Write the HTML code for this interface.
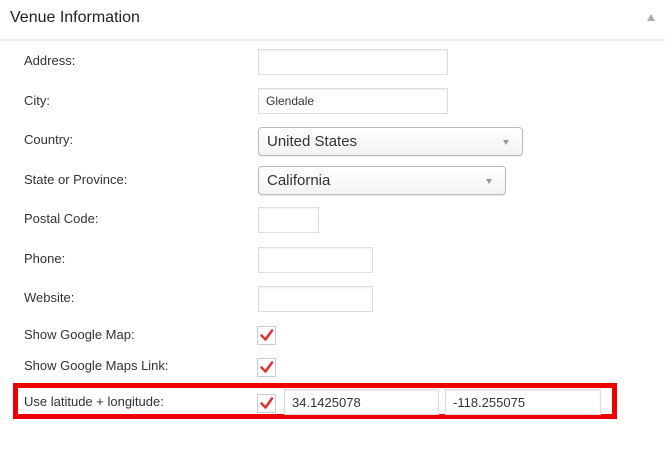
<!DOCTYPE html>
<html><head><style>
*{box-sizing:border-box;margin:0;padding:0}
body{width:665px;height:449px;background:#fff;font-family:"Liberation Sans",sans-serif;color:#333;position:relative;overflow:hidden}
.a{position:absolute}
.h{left:10px;top:9px;font-size:16px;color:#222}
.hr{left:0;top:39px;width:665px;height:2px;background:#eee}
.tri{left:647px;top:14px;width:0;height:0;border-left:4px solid transparent;border-right:4px solid transparent;border-bottom:7px solid #aaa}
.l{left:24px;font-size:13px;color:#333}
.i{border:1px solid #ddd;box-shadow:inset 0 1px 2px rgba(0,0,0,.07);background:#fff;font-size:12px;padding-left:7px;line-height:25px}
.s{border:1px solid #bbb;border-radius:4px;background:linear-gradient(#fff,#f3f3f3);box-shadow:0 1px 1px rgba(0,0,0,.1);font-size:15px;padding-left:8px;line-height:28px;color:#333}
.s:after{content:"";position:absolute;right:13px;top:12px;border-left:3px solid transparent;border-right:3px solid transparent;border-top:5px solid #999}
.red{left:13px;top:383px;width:604px;height:36px;border:5px solid #e00}
</style></head><body>
<div class="a h">Venue Information</div>
<div class="a hr"></div>
<div class="a tri"></div>
<div class="a l" style="top:53px">Address:</div>
<div class="a i" style="left:258px;top:49px;width:190px;height:26px"></div>
<div class="a l" style="top:93px">City:</div>
<div class="a i" style="left:258px;top:88px;width:190px;height:26px">Glendale</div>
<div class="a l" style="top:132px">Country:</div>
<div class="a s" style="left:258px;top:127px;width:265px;height:29px">United States</div>
<div class="a l" style="top:172px">State or Province:</div>
<div class="a s" style="left:258px;top:166px;width:248px;height:29px">California</div>
<div class="a l" style="top:211px">Postal Code:</div>
<div class="a i" style="left:258px;top:207px;width:61px;height:26px"></div>
<div class="a l" style="top:251px">Phone:</div>
<div class="a i" style="left:258px;top:247px;width:115px;height:26px"></div>
<div class="a l" style="top:290px">Website:</div>
<div class="a i" style="left:258px;top:286px;width:115px;height:26px"></div>
<div class="a l" style="top:327px">Show Google Map:</div>
<div class="a l" style="top:358px">Show Google Maps Link:</div>
<div class="a l" style="top:394px">Use latitude + longitude:</div>
<div class="a red"></div>
<svg class="a" style="left:257px;top:326px" width="20" height="90">
<g fill="#fff" stroke="#ccc"><rect x="0.5" y="0.5" width="18" height="18"/><rect x="0.5" y="32.5" width="18" height="18"/><rect x="0.5" y="68.5" width="18" height="18"/></g>
<g fill="none" stroke="#d33" stroke-width="2.6" stroke-linecap="round" stroke-linejoin="round"><path d="M4.5 9.5l4 4 6.5-9"/><path d="M4.5 41.5l4 4 6.5-9"/><path d="M4.5 77.5l4 4 6.5-9"/></g>
</svg>
<div class="a i" style="left:284px;top:389px;width:155px;height:26px;font-size:13px">34.1425078</div>
<div class="a i" style="left:445px;top:389px;width:156px;height:26px;font-size:13px">-118.255075</div>
</body></html>
